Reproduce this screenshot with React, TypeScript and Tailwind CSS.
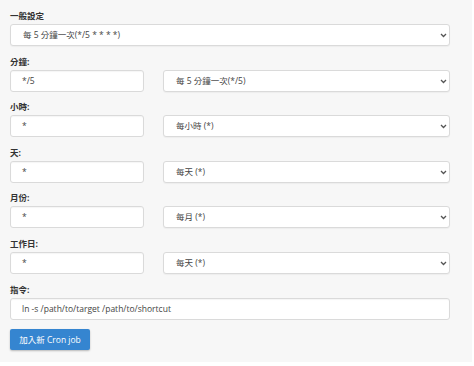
import React from "react";

const font = { fontFamily: '"Open Sans", "Noto Sans CJK TC", sans-serif' };

function Chevron() {
  return (
    <svg width="7" height="5" viewBox="0 0 7 5" className="absolute right-[2px] top-[8px]">
      <path d="M1 1 L3.5 3.5 L6 1" fill="none" stroke="#555" strokeWidth="1.3" />
    </svg>
  );
}

function Select({ text, className }: { text: string; className: string }) {
  return (
    <div className={`relative h-[22px] rounded-[3px] border border-[#dadada] bg-white pl-[12px] text-[8.5px] leading-[20px] text-[#444] shadow-[0_1px_1px_rgba(0,0,0,0.04)] ${className}`}>
      {text}
      <Chevron />
    </div>
  );
}

function Input({ text, className }: { text: string; className: string }) {
  return (
    <div className={`h-[22px] rounded-[3px] border border-[#dadada] bg-white pl-[11px] text-[8.5px] leading-[20px] text-[#444] shadow-[inset_0_1px_1px_rgba(0,0,0,0.04)] ${className}`}>
      {text}
    </div>
  );
}

function Label({ text }: { text: string }) {
  return <div className="mb-[1px] h-[14px] text-[8.5px] font-bold leading-[14px] text-[#333]">{text}</div>;
}

const rows = [
  { label: "分鐘:", value: "*/5", sel: "每 5 分鐘一次(*/5)" },
  { label: "小時:", value: "*", sel: "每小時 (*)" },
  { label: "天:", value: "*", sel: "每天 (*)" },
  { label: "月份:", value: "*", sel: "每月 (*)" },
  { label: "工作日:", value: "*", sel: "每天 (*)" },
];

export default function App() {
  return (
    <div className="h-[366px] w-[474px] bg-white" style={font}>
      <div className="flex h-[362px] w-[472px] flex-col gap-[8.6px] bg-[#f7f7f7] pl-[10px] pt-[9px]">
        <div>
          <Label text="一般設定" />
          <Select text="每 5 分鐘一次(*/5 * * * *)" className="w-[440px]" />
        </div>
        {rows.map((r) => (
          <div key={r.label}>
            <Label text={r.label} />
            <div className="flex gap-[19px]">
              <Input text={r.value} className="w-[134px]" />
              <Select text={r.sel} className="w-[287px]" />
            </div>
          </div>
        ))}
        <div>
          <Label text="指令:" />
          <Input text="ln -s /path/to/target /path/to/shortcut" className="w-[440px]" />
        </div>
        <button className="mt-[1px] h-[21px] w-[80px] rounded-[2px] bg-[#3585d0] text-[8.5px] leading-[21px] text-white shadow-[0_1px_2px_rgba(0,0,0,0.25)]">
          加入新 Cron job
        </button>
      </div>
    </div>
  );
}
